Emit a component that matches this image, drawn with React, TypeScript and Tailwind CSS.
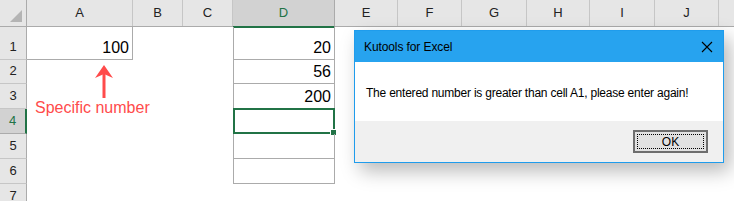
import React from 'react';

const cols = [
  { name: 'A', w: 106 },
  { name: 'B', w: 50 },
  { name: 'C', w: 50 },
  { name: 'D', w: 102 },
  { name: 'E', w: 63 },
  { name: 'F', w: 64 },
  { name: 'G', w: 65 },
  { name: 'H', w: 63 },
  { name: 'I', w: 65 },
  { name: 'J', w: 64 },
];

const rows = [
  { n: 1, h: 33 },
  { n: 2, h: 24 },
  { n: 3, h: 25 },
  { n: 4, h: 25 },
  { n: 5, h: 25 },
  { n: 6, h: 25 },
  { n: 7, h: 25 },
];

const dValues: Record<number, string> = { 1: '20', 2: '56', 3: '200' };

const Cell: React.FC<{ col: string; row: number; w: number }> = ({ col, row, w }) => {
  let cls = 'relative shrink-0 h-full box-border flex items-end justify-end pr-[3px] pb-[1px] text-[16px] leading-[20px] text-black';
  let value = '';
  if (col === 'A' && row === 1) {
    cls += ' border-r border-b border-[#ababab]';
    value = '100';
  }
  if (col === 'D' && row <= 6) {
    cls += ' border-l border-r border-b border-[#ababab]';
    value = dValues[row] ?? '';
  }
  return (
    <div className={cls} style={{ width: w }}>
      {value}
      {col === 'D' && row === 4 && (
        <>
          <div className="absolute -left-px -top-px -right-px -bottom-px border-2 border-[#217346]" />
          <div className="absolute -right-[3px] -bottom-[3px] w-[5px] h-[5px] bg-[#217346] border border-white box-content" />
        </>
      )}
    </div>
  );
};

export default function App() {
  return (
    <div className="relative w-[734px] h-[201px] overflow-hidden bg-white" style={{ fontFamily: '"Liberation Sans", Arial, sans-serif' }}>
      {/* column headers */}
      <div className="flex h-[27px] bg-[#e6e6e6] border-b border-[#ababab] box-border">
        <div className="relative w-[27px] shrink-0 h-full border-r border-[#ababab] box-border">
          <div className="absolute right-[4px] bottom-[4px] w-0 h-0 border-l-[12px] border-l-transparent border-b-[12px] border-b-[#b4b4b4]" />
        </div>
        {cols.map((c) =>
          c.name === 'D' ? (
            <div key={c.name} className="shrink-0 flex items-center justify-center bg-[#d2d2d2] text-[#217346] text-[13px] border-r border-[#ababab] border-b-2 border-b-[#217346] box-border -mb-px" style={{ width: c.w, height: 28 }}>
              {c.name}
            </div>
          ) : (
            <div key={c.name} className="shrink-0 h-full flex items-center justify-center text-[13px] text-[#222] border-r border-[#c6c6c6] box-border" style={{ width: c.w }}>
              {c.name}
            </div>
          )
        )}
      </div>

      {/* rows */}
      {rows.map((r) => (
        <div key={r.n} className="flex" style={{ height: r.h }}>
          <div
            className={
              r.n === 4
                ? 'w-[27px] shrink-0 h-full flex items-end justify-center pb-[3px] text-[13px] text-[#217346] bg-[#d2d2d2] border-r-2 border-[#217346] border-b border-b-[#ababab] box-border'
                : 'w-[27px] shrink-0 h-full flex items-end justify-center pb-[3px] text-[13px] text-[#222] bg-[#e6e6e6] border-r border-[#ababab] border-b border-b-[#c6c6c6] box-border'
            }
          >
            {r.n}
          </div>
          {cols.map((c) => (
            <Cell key={c.name} col={c.name} row={r.n} w={c.w} />
          ))}
        </div>
      ))}

      {/* annotation */}
      <svg className="absolute left-[92px] top-[64px]" width="24" height="34" viewBox="0 0 24 34">
        <path d="M12 6 L12 34" stroke="#ff4b4b" strokeWidth="3" />
        <path d="M3 14 L12 1 L21 14 L12 10 Z" fill="#ff4b4b" />
      </svg>
      <div className="absolute left-[35px] top-[99px] text-[16px] leading-[18px] text-[#ff4b4b]">Specific number</div>

      {/* dialog */}
      <div className="absolute left-[354px] top-[30px] w-[370px] h-[133px] border border-[#1f9cec] bg-white flex flex-col shadow-[6px_8px_18px_rgba(0,0,0,0.28)]">
        <div className="h-[31px] bg-[#27a3ef] flex items-center justify-between pl-[9px] pr-[10px]">
          <span className="text-[12px] tracking-[-0.1px] text-black">Kutools for Excel</span>
          <svg width="12" height="12" viewBox="0 0 12 12">
            <path d="M1 1 L11 11 M11 1 L1 11" stroke="#000" strokeWidth="1.1" />
          </svg>
        </div>
        <div className="h-[59px] flex items-center pl-[11px] pt-[3px] text-[12px] tracking-[-0.22px] text-black">
          The entered number is greater than cell A1, please enter again!
        </div>
        <div className="flex-1 bg-[#f0f0f0] flex justify-end items-start pt-[9px] pr-[15px]">
          <div className="w-[75px] h-[23px] border-2 border-[#6e6e6e] bg-[#e1e1e1] p-[2px] box-border">
            <div className="w-full h-full border border-dotted border-black flex items-center justify-center text-[12px] text-black">
              OK
            </div>
          </div>
        </div>
      </div>
    </div>
  );
}
